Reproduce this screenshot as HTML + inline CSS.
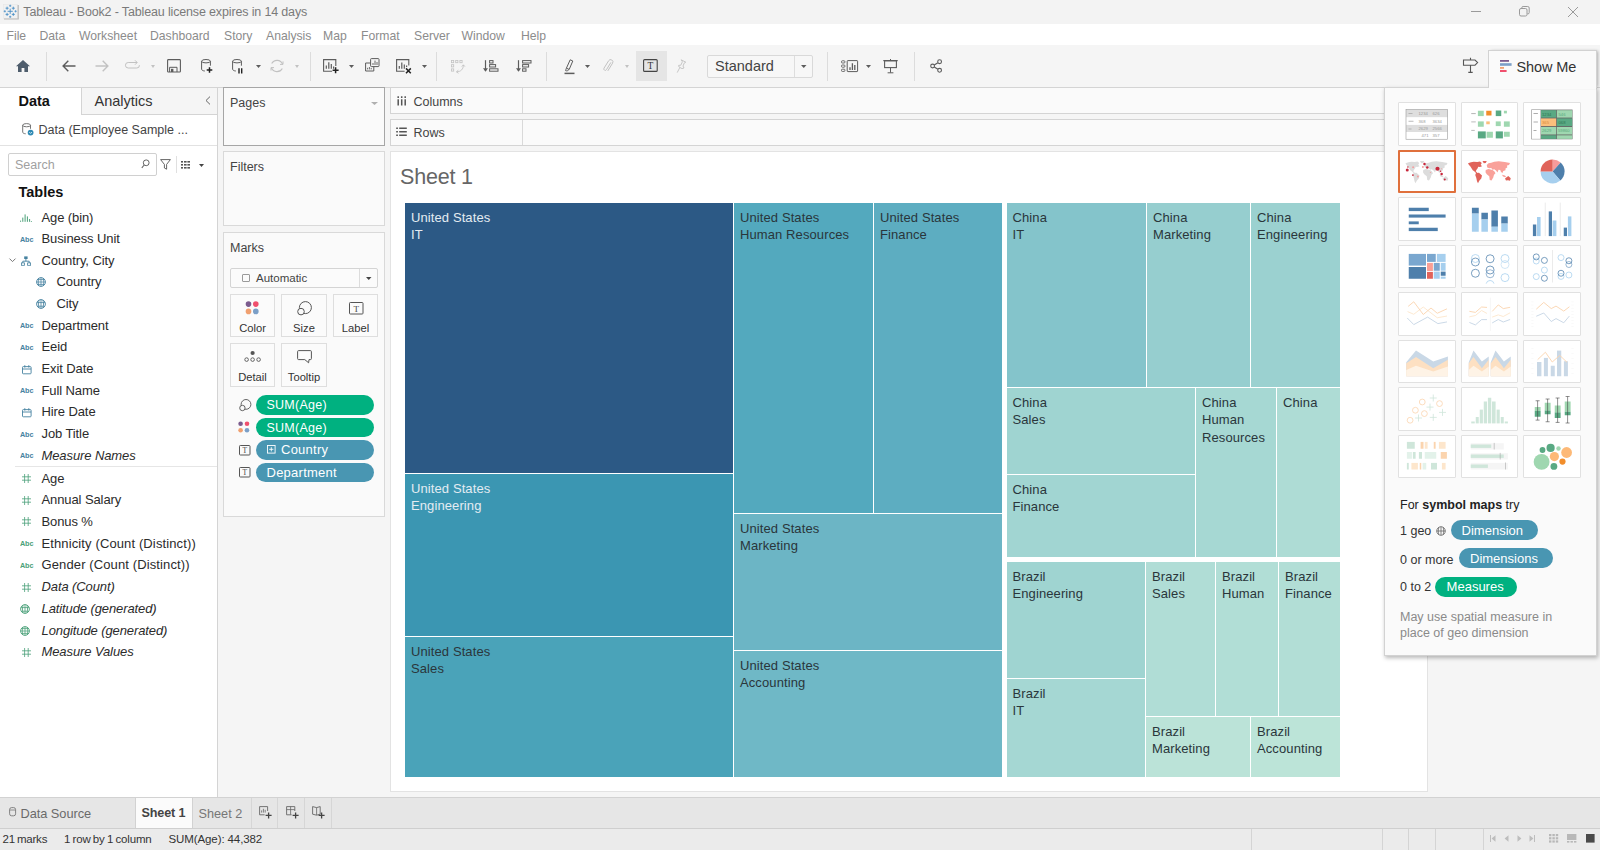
<!DOCTYPE html>
<html><head><meta charset="utf-8"><title>Tableau - Book2</title>
<style>
html,body{margin:0;padding:0;}
body{width:1600px;height:850px;overflow:hidden;position:relative;background:#f5f5f5;font-family:"Liberation Sans",sans-serif;color:#333;}
.t{position:absolute;white-space:nowrap;}
.b{position:absolute;box-sizing:border-box;}
svg{position:absolute;overflow:visible;}
.cell{position:absolute;box-sizing:border-box;font-size:13px;line-height:17.5px;letter-spacing:0.1px;padding:5.6px 0 0 6px;overflow:hidden;white-space:nowrap;}
</style></head><body>

<div class="b" style="left:0px;top:0px;width:1600px;height:24px;background:#f3f3f3;"></div>
<svg style="left:2.5px;top:4px" width="16" height="16" viewBox="0 0 16 16" ><rect x="0.5" y="0.5" width="14" height="14" fill="#f1f1f1" stroke="#e6e6e6" stroke-width="0.6"/><path d="M1 15h14.2V1" fill="none" stroke="#b8b8b8" stroke-width="1.2"/><path d="M4.6,7.3h5.2M7.2,4.699999999999999v5.2" stroke="#4a8fc6" stroke-width="0.9"/><path d="M6.1,1.8h2.2M7.2,0.7v2.2" stroke="#4a8fc6" stroke-width="0.8"/><path d="M6.1,12.8h2.2M7.2,11.700000000000001v2.2" stroke="#4a8fc6" stroke-width="0.8"/><path d="M0.7,7.3h2.2M1.8,6.199999999999999v2.2" stroke="#4a8fc6" stroke-width="0.8"/><path d="M11.5,7.3h2.2M12.6,6.199999999999999v2.2" stroke="#4a8fc6" stroke-width="0.8"/><path d="M2.5999999999999996,4.2h3.0M4.1,2.7v3.0" stroke="#4a8fc6" stroke-width="0.9"/><path d="M8.8,4.2h3.0M10.3,2.7v3.0" stroke="#4a8fc6" stroke-width="0.9"/><path d="M2.5999999999999996,10.4h3.0M4.1,8.9v3.0" stroke="#4a8fc6" stroke-width="0.9"/><path d="M8.8,10.4h3.0M10.3,8.9v3.0" stroke="#4a8fc6" stroke-width="0.9"/></svg>
<div class="t" style="left:23.3px;top:2.27px;font-size:12.5px;line-height:20px;color:#7a7a7a;letter-spacing:-0.15px;">Tableau - Book2 - Tableau license expires in 14 days</div>
<svg style="left:1471px;top:11px" width="10" height="1" viewBox="0 0 10 1" ><rect width="10" height="1" fill="#9a9a9a"/></svg><svg style="left:1519px;top:6px" width="11" height="11" viewBox="0 0 11 11" ><rect x="0.5" y="2.5" width="7.5" height="7.5" rx="1.5" fill="none" stroke="#9a9a9a"/><path d="M2.8 2.3V1.8q0-1.3 1.3-1.3h4.6q1.5 0 1.5 1.5v4.6q0 1.3-1.3 1.3h-0.6" fill="none" stroke="#9a9a9a"/></svg><svg style="left:1568px;top:6.5px" width="10" height="10" viewBox="0 0 10 10" ><path d="M0 0l10 10M10 0L0 10" stroke="#9a9a9a" stroke-width="1" fill="none"/></svg>
<div class="b" style="left:0px;top:24px;width:1600px;height:21px;background:#ffffff;"></div>
<div class="t" style="left:6.5px;top:25.77px;font-size:12.2px;line-height:20px;color:#8c8c8c;">File</div>
<div class="t" style="left:39.5px;top:25.77px;font-size:12.2px;line-height:20px;color:#8c8c8c;">Data</div>
<div class="t" style="left:79px;top:25.77px;font-size:12.2px;line-height:20px;color:#8c8c8c;">Worksheet</div>
<div class="t" style="left:150px;top:25.77px;font-size:12.2px;line-height:20px;color:#8c8c8c;">Dashboard</div>
<div class="t" style="left:224px;top:25.77px;font-size:12.2px;line-height:20px;color:#8c8c8c;">Story</div>
<div class="t" style="left:266px;top:25.77px;font-size:12.2px;line-height:20px;color:#8c8c8c;">Analysis</div>
<div class="t" style="left:323px;top:25.77px;font-size:12.2px;line-height:20px;color:#8c8c8c;">Map</div>
<div class="t" style="left:361px;top:25.77px;font-size:12.2px;line-height:20px;color:#8c8c8c;">Format</div>
<div class="t" style="left:414px;top:25.77px;font-size:12.2px;line-height:20px;color:#8c8c8c;">Server</div>
<div class="t" style="left:461.5px;top:25.77px;font-size:12.2px;line-height:20px;color:#8c8c8c;">Window</div>
<div class="t" style="left:521px;top:25.77px;font-size:12.2px;line-height:20px;color:#8c8c8c;">Help</div>
<div class="b" style="left:0px;top:45px;width:1600px;height:43px;background:#f5f5f5;border-bottom:1px solid #d4d4d4;"></div>
<div class="b" style="left:46px;top:52px;width:1px;height:29px;background:#dcdcdc;"></div>
<div class="b" style="left:310px;top:52px;width:1px;height:29px;background:#dcdcdc;"></div>
<div class="b" style="left:436px;top:52px;width:1px;height:29px;background:#dcdcdc;"></div>
<div class="b" style="left:546px;top:52px;width:1px;height:29px;background:#dcdcdc;"></div>
<div class="b" style="left:827px;top:52px;width:1px;height:29px;background:#dcdcdc;"></div>
<div class="b" style="left:914px;top:52px;width:1px;height:29px;background:#dcdcdc;"></div>
<div class="b" style="left:636px;top:51px;width:30.5px;height:30px;background:#e5e5e5;"></div>
<div class="b" style="left:707px;top:55px;width:106px;height:22.5px;background:#f7f7f7;border:1px solid #d9d9d9;border-radius:2px;"></div>
<div class="b" style="left:794px;top:56px;width:1px;height:20.5px;background:#dddddd;"></div>
<div class="t" style="left:715px;top:56.48px;font-size:14.5px;line-height:20px;color:#444;">Standard</div>
<svg style="left:16px;top:60px" width="14" height="12" viewBox="0 0 14 12" ><path d="M7 0L0 6.3h2V12h3.6V8h2.8v4H12V6.3h2z" fill="#4e5d6c"/></svg>
<svg style="left:62px;top:59.5px" width="14" height="12" viewBox="0 0 14 12" ><path d="M13.5 6H1.2M6.3 0.8L1.1 6l5.2 5.2" fill="none" stroke="#5c5c5c" stroke-width="1.4"/></svg>
<svg style="left:95px;top:59.5px" width="14" height="12" viewBox="0 0 14 12" ><path d="M0.5 6h12.3M7.7 0.8L12.9 6l-5.2 5.2" fill="none" stroke="#c2c2c2" stroke-width="1.4"/></svg>
<svg style="left:125px;top:60px" width="15" height="9" viewBox="0 0 15 9" ><path d="M10 0.3l2.2 2.2-2.2 2.2M12 2.5H3.2a2.7 2.7 0 0 0 0 5.5h8.6a2.6 2.6 0 0 0 2.6-2.8" fill="none" stroke="#c2c2c2" stroke-width="1"/></svg>
<svg style="left:150.5px;top:64.5px" width="4" height="3" viewBox="0 0 4 3" ><path d="M0 0h4l-2.0 3z" fill="#c2c2c2"/></svg>
<svg style="left:167px;top:59px" width="14" height="14" viewBox="0 0 14 14" ><rect x="0.6" y="0.6" width="12.8" height="12.4" rx="0.8" fill="none" stroke="#5c5c5c" stroke-width="1.1"/><path d="M2.6 13V8.3h7.4V13" fill="none" stroke="#5c5c5c" stroke-width="1"/><rect x="4" y="9.8" width="2.4" height="3.2" fill="#5c5c5c"/></svg>
<svg style="left:201px;top:59px" width="13" height="15" viewBox="0 0 13 15" ><ellipse cx="5" cy="2.2" rx="4.4" ry="1.7" fill="none" stroke="#5c5c5c" stroke-width="1"/><path d="M0.6 2.2v8c0 1 1.5 1.7 3.2 1.8M9.4 2.2v4.5" fill="none" stroke="#5c5c5c" stroke-width="1"/><path d="M8.5 8.2v5.6M5.7 11h5.6" stroke="#222" stroke-width="1.5"/></svg>
<svg style="left:232px;top:59px" width="13" height="16" viewBox="0 0 13 16" ><ellipse cx="5" cy="2.2" rx="4.4" ry="1.7" fill="none" stroke="#5c5c5c" stroke-width="1"/><path d="M0.6 2.2v8c0 1 1.5 1.7 3.2 1.8M9.4 2.2v4.5" fill="none" stroke="#5c5c5c" stroke-width="1"/><path d="M7 9.2v5.4M9.7 9.2v5.4" stroke="#222" stroke-width="1.4"/></svg>
<svg style="left:255.5px;top:64.5px" width="5" height="3" viewBox="0 0 5 3" ><path d="M0 0h5l-2.5 3z" fill="#5c5c5c"/></svg>
<svg style="left:270px;top:59px" width="14" height="14" viewBox="0 0 14 14" ><path d="M12.6 5.2A6 6 0 0 0 1.7 4.6M1.4 8.8A6 6 0 0 0 12.3 9.4" fill="none" stroke="#c2c2c2" stroke-width="1.1"/><path d="M10 5.4h3V2.4M4 8.6H1v3" fill="none" stroke="#c2c2c2" stroke-width="1"/></svg>
<svg style="left:295px;top:64.5px" width="4" height="3" viewBox="0 0 4 3" ><path d="M0 0h4l-2.0 3z" fill="#c2c2c2"/></svg>
<svg style="left:323px;top:59px" width="17" height="15" viewBox="0 0 17 15" ><path d="M12.8 7V0.6H0.6v11.6h8.5" fill="none" stroke="#5c5c5c" stroke-width="1.1"/><path d="M3.3 9.8V6.5M5.8 9.8V3.2M8.3 9.8V5M10.6 9.8V7.6" stroke="#5c5c5c" stroke-width="1.2"/><path d="M12.6 8.2v6M9.6 11.2h6" stroke="#222" stroke-width="1.5"/></svg>
<svg style="left:348.5px;top:64.5px" width="5" height="3" viewBox="0 0 5 3" ><path d="M0 0h5l-2.5 3z" fill="#5c5c5c"/></svg>
<svg style="left:365px;top:58px" width="15" height="14" viewBox="0 0 15 14" ><rect x="5.6" y="0.6" width="8.4" height="8" rx="0.8" fill="#f5f5f5" stroke="#5c5c5c" stroke-width="1"/><path d="M8 7V5M10 7V2.6M12 7V4" stroke="#5c5c5c" stroke-width="0.9"/><path d="M5.6 5H0.6v8h8.2V8.6" fill="none" stroke="#5c5c5c" stroke-width="1"/><path d="M2.6 11.4V9.8M4.4 11.4V9M6.2 11.4V10" stroke="#5c5c5c" stroke-width="0.9"/></svg>
<svg style="left:396px;top:59px" width="17" height="15" viewBox="0 0 17 15" ><path d="M12.8 6.5V0.6H0.6v11.6h8" fill="none" stroke="#5c5c5c" stroke-width="1.1"/><path d="M3.3 9.8V7M5.8 9.8V3.6M8.3 9.8V5.4M10.6 8V6.6" stroke="#5c5c5c" stroke-width="1.2"/><path d="M10 9.4l4.8 4.8M14.8 9.4L10 14.2" stroke="#222" stroke-width="1.5"/></svg>
<svg style="left:421.5px;top:64.5px" width="5" height="3" viewBox="0 0 5 3" ><path d="M0 0h5l-2.5 3z" fill="#5c5c5c"/></svg>
<svg style="left:451px;top:60px" width="14" height="14" viewBox="0 0 14 14" ><rect x="0.5" y="0.5" width="2.2" height="2.2" fill="none" stroke="#c2c2c2" stroke-width="0.8"/><rect x="4.7" y="0.5" width="2.2" height="2.2" fill="none" stroke="#c2c2c2" stroke-width="0.8"/><rect x="8.9" y="0.5" width="2.2" height="2.2" fill="none" stroke="#c2c2c2" stroke-width="0.8"/><rect x="0.5" y="4.7" width="2.2" height="2.2" fill="none" stroke="#c2c2c2" stroke-width="0.8"/><rect x="0.5" y="8.9" width="2.2" height="2.2" fill="none" stroke="#c2c2c2" stroke-width="0.8"/><path d="M12.4 5c0 4-2.5 6.8-6.8 6.8" fill="none" stroke="#c2c2c2" stroke-width="0.9"/><path d="M10.8 6.6l1.6-1.8 1.5 1.8M7.4 10.2l-1.9 1.6 1.9 1.5" fill="none" stroke="#c2c2c2" stroke-width="0.9"/></svg>
<svg style="left:483px;top:60px" width="16" height="13" viewBox="0 0 16 13" ><path d="M2.5 0.2v10.5" stroke="#5c5c5c" stroke-width="1.2"/><path d="M0 8.2h5l-2.5 3.6z" fill="#5c5c5c"/><rect x="6.6" y="0.6" width="3.4" height="2.4" fill="none" stroke="#5c5c5c" stroke-width="1"/><rect x="6.6" y="4.6" width="6" height="2.4" fill="none" stroke="#5c5c5c" stroke-width="1"/><rect x="6.6" y="8.8" width="8.4" height="2.4" fill="none" stroke="#5c5c5c" stroke-width="1"/></svg>
<svg style="left:516px;top:60px" width="16" height="13" viewBox="0 0 16 13" ><path d="M2.5 0.2v10.5" stroke="#5c5c5c" stroke-width="1.2"/><path d="M0 8.2h5l-2.5 3.6z" fill="#5c5c5c"/><rect x="6.6" y="0.6" width="8.4" height="2.4" fill="none" stroke="#5c5c5c" stroke-width="1"/><rect x="6.6" y="4.6" width="6" height="2.4" fill="none" stroke="#5c5c5c" stroke-width="1"/><rect x="6.6" y="8.8" width="3.4" height="2.4" fill="none" stroke="#5c5c5c" stroke-width="1"/></svg>
<svg style="left:563.5px;top:58.5px" width="12" height="16" viewBox="0 0 12 16" ><path d="M6.2 0.8l2.6 1.2-3.6 8.4-2.8-1.2z" fill="none" stroke="#5c5c5c" stroke-width="1"/><path d="M2.4 9.2l-0.9 2.4 1.6 0.4 2.1-1.6" fill="none" stroke="#5c5c5c" stroke-width="0.9"/><path d="M0.5 14.4h10" stroke="#5c5c5c" stroke-width="1.5"/></svg>
<svg style="left:584.5px;top:64.5px" width="5" height="3" viewBox="0 0 5 3" ><path d="M0 0h5l-2.5 3z" fill="#5c5c5c"/></svg>
<svg style="left:602px;top:59px" width="12" height="14" viewBox="0 0 12 14" ><path d="M8.6 3.4L4.2 10.6a1.4 1.4 0 0 1-2.5-1.4L6.3 1.8a2.3 2.3 0 0 1 4 2.3L5.5 11.9" fill="none" stroke="#c2c2c2" stroke-width="1" transform="translate(0.3,0)"/></svg>
<svg style="left:625px;top:64.5px" width="4" height="3" viewBox="0 0 4 3" ><path d="M0 0h4l-2.0 3z" fill="#c2c2c2"/></svg>
<svg style="left:643px;top:59px" width="15" height="13" viewBox="0 0 15 13" ><rect x="0.6" y="0.6" width="13.6" height="11.8" rx="1" fill="none" stroke="#444" stroke-width="1.1"/><text x="7.4" y="10" text-anchor="middle" font-family="Liberation Serif,serif" font-size="9.5" fill="#333">T</text></svg>
<svg style="left:676px;top:58.5px" width="11" height="15" viewBox="0 0 11 15" ><path d="M5.2 0.8l4.6 2.4-1.4 0.6-1.4 3.2 1 2-2 0.6-3-1.6-0.4-1.6 2.2-0.2 1.6-3.4z" fill="none" stroke="#c2c2c2" stroke-width="0.9" stroke-linejoin="round"/><path d="M3.8 8.6L1.2 13.6" stroke="#c2c2c2" stroke-width="0.9"/></svg>
<svg style="left:801px;top:64.5px" width="5.5" height="3" viewBox="0 0 5.5 3" ><path d="M0 0h5.5l-2.75 3z" fill="#5c5c5c"/></svg>
<svg style="left:841px;top:60px" width="18" height="13" viewBox="0 0 18 13" ><rect x="0.5" y="0.8" width="3.4" height="2.2" rx="0.8" fill="none" stroke="#5c5c5c" stroke-width="0.9"/><rect x="0.5" y="5" width="3.4" height="2.2" rx="0.8" fill="none" stroke="#5c5c5c" stroke-width="0.9"/><rect x="0.5" y="9.2" width="3.4" height="2.2" rx="0.8" fill="none" stroke="#5c5c5c" stroke-width="0.9"/><rect x="6.2" y="0.6" width="10.4" height="11" rx="0.6" fill="none" stroke="#5c5c5c" stroke-width="1"/><path d="M9 10V7.2M11.4 10V3.2M13.8 10V5" stroke="#5c5c5c" stroke-width="1.3"/></svg>
<svg style="left:865.5px;top:64.5px" width="5" height="3" viewBox="0 0 5 3" ><path d="M0 0h5l-2.5 3z" fill="#5c5c5c"/></svg>
<svg style="left:883px;top:58.5px" width="15" height="15" viewBox="0 0 15 15" ><path d="M0.3 1.6h14.4" stroke="#5c5c5c" stroke-width="1.2"/><path d="M7.5 0v1.4" stroke="#5c5c5c" stroke-width="1"/><rect x="1.6" y="1.8" width="11.8" height="6.8" fill="none" stroke="#5c5c5c" stroke-width="1.1"/><path d="M7.5 8.8v4.8M4.6 13.8h5.8" stroke="#5c5c5c" stroke-width="1"/></svg>
<svg style="left:930px;top:58.5px" width="13" height="14" viewBox="0 0 13 14" ><circle cx="2.6" cy="7" r="1.9" fill="none" stroke="#5c5c5c" stroke-width="1.1"/><circle cx="9.6" cy="2.7" r="1.9" fill="none" stroke="#5c5c5c" stroke-width="1.1"/><circle cx="9.6" cy="11.3" r="1.9" fill="none" stroke="#5c5c5c" stroke-width="1.1"/><path d="M4.3 6l3.6-2.3M4.3 8l3.6 2.3" stroke="#5c5c5c" stroke-width="1.1"/></svg>
<div class="b" style="left:0px;top:88px;width:217px;height:709px;background:#ffffff;"></div>
<div class="b" style="left:217px;top:88px;width:1px;height:709px;background:#d4d4d4;"></div>
<div class="b" style="left:81px;top:88px;width:136px;height:27px;background:#f5f5f5;border-left:1px solid #d4d4d4;border-bottom:1px solid #d4d4d4;"></div>
<div class="t" style="left:18.5px;top:90.58px;font-size:14.5px;line-height:20px;color:#111;font-weight:bold;">Data</div>
<div class="t" style="left:94.5px;top:90.78px;font-size:14.5px;line-height:20px;color:#333;">Analytics</div>
<div class="t" style="left:38.5px;top:119.87px;font-size:12.5px;line-height:20px;color:#444;">Data (Employee Sample ...</div>
<div class="b" style="left:0px;top:145px;width:217px;height:1px;background:#e2e2e2;"></div>
<div class="b" style="left:8px;top:153px;width:149px;height:23px;background:#fff;border:1px solid #d0d0d0;border-radius:2px;"></div>
<div class="t" style="left:15px;top:154.67px;font-size:12.5px;line-height:20px;color:#a0a0a0;">Search</div>
<div class="b" style="left:176px;top:156px;width:1px;height:17px;background:#e0e0e0;"></div>
<div class="t" style="left:18.5px;top:182.48px;font-size:14.5px;line-height:20px;color:#111;font-weight:bold;">Tables</div>
<div class="t" style="left:41.5px;top:207.50px;font-size:13px;line-height:20px;color:#2b2b2b;letter-spacing:-0.1px;">Age (bin)</div>
<div class="t" style="left:41.5px;top:229.15px;font-size:13px;line-height:20px;color:#2b2b2b;letter-spacing:-0.1px;">Business Unit</div>
<div class="t" style="left:41.5px;top:250.80px;font-size:13px;line-height:20px;color:#2b2b2b;letter-spacing:-0.1px;">Country, City</div>
<div class="t" style="left:56.5px;top:272.45px;font-size:13px;line-height:20px;color:#2b2b2b;letter-spacing:-0.1px;">Country</div>
<div class="t" style="left:56.5px;top:294.10px;font-size:13px;line-height:20px;color:#2b2b2b;letter-spacing:-0.1px;">City</div>
<div class="t" style="left:41.5px;top:315.75px;font-size:13px;line-height:20px;color:#2b2b2b;letter-spacing:-0.1px;">Department</div>
<div class="t" style="left:41.5px;top:337.40px;font-size:13px;line-height:20px;color:#2b2b2b;letter-spacing:-0.1px;">Eeid</div>
<div class="t" style="left:41.5px;top:359.05px;font-size:13px;line-height:20px;color:#2b2b2b;letter-spacing:-0.1px;">Exit Date</div>
<div class="t" style="left:41.5px;top:380.70px;font-size:13px;line-height:20px;color:#2b2b2b;letter-spacing:-0.1px;">Full Name</div>
<div class="t" style="left:41.5px;top:402.35px;font-size:13px;line-height:20px;color:#2b2b2b;letter-spacing:-0.1px;">Hire Date</div>
<div class="t" style="left:41.5px;top:424.00px;font-size:13px;line-height:20px;color:#2b2b2b;letter-spacing:-0.1px;">Job Title</div>
<div class="t" style="left:41.5px;top:445.65px;font-size:13px;line-height:20px;color:#2b2b2b;font-style:italic;letter-spacing:-0.1px;">Measure Names</div>
<div class="b" style="left:15px;top:466px;width:202px;height:1px;background:#e6e6e6;"></div>
<div class="t" style="left:41.5px;top:468.50px;font-size:13px;line-height:20px;color:#2b2b2b;letter-spacing:-0.1px;">Age</div>
<div class="t" style="left:41.5px;top:490.22px;font-size:13px;line-height:20px;color:#2b2b2b;letter-spacing:-0.1px;">Annual Salary</div>
<div class="t" style="left:41.5px;top:511.94px;font-size:13px;line-height:20px;color:#2b2b2b;letter-spacing:-0.1px;">Bonus %</div>
<div class="t" style="left:41.5px;top:533.66px;font-size:13px;line-height:20px;color:#2b2b2b;letter-spacing:0.12px;">Ethnicity (Count (Distinct))</div>
<div class="t" style="left:41.5px;top:555.38px;font-size:13px;line-height:20px;color:#2b2b2b;letter-spacing:0.12px;">Gender (Count (Distinct))</div>
<div class="t" style="left:41.5px;top:577.10px;font-size:13px;line-height:20px;color:#2b2b2b;font-style:italic;letter-spacing:-0.1px;">Data (Count)</div>
<div class="t" style="left:41.5px;top:598.82px;font-size:13px;line-height:20px;color:#2b2b2b;font-style:italic;letter-spacing:-0.1px;">Latitude (generated)</div>
<div class="t" style="left:41.5px;top:620.54px;font-size:13px;line-height:20px;color:#2b2b2b;font-style:italic;letter-spacing:-0.1px;">Longitude (generated)</div>
<div class="t" style="left:41.5px;top:642.26px;font-size:13px;line-height:20px;color:#2b2b2b;font-style:italic;letter-spacing:-0.1px;">Measure Values</div>
<svg style="left:20px;top:213.5px" width="12" height="8" viewBox="0 0 12 8" ><path d="M0.6 6.6v1.2M2.8 3.6v4.2M5.1 0.4v7.4M7.4 2.4v5.4M9.6 5v2.8M11.4 7v0.8" stroke="#4aa078" stroke-width="1" fill="none"/></svg>
<div class="t" style="left:20px;top:229.65px;font-size:8px;line-height:20px;font-weight:bold;color:#4682a0;letter-spacing:-0.1px;transform:scaleX(0.9);transform-origin:0 0;">Abc</div>
<svg style="left:21px;top:255.8px" width="10" height="10" viewBox="0 0 10 10" ><rect x="3.2" y="0.4" width="3.4" height="2.6" fill="#4682a0" /><path d="M4.9 3v2.2M1.8 7V5.2h6.4V7" fill="none" stroke="#4682a0" stroke-width="0.9"/><rect x="0.4" y="6.9" width="3" height="2.4" fill="none" stroke="#4682a0" stroke-width="0.8"/><rect x="6.6" y="6.9" width="3" height="2.4" fill="none" stroke="#4682a0" stroke-width="0.8"/></svg>
<svg style="left:36px;top:277.45px" width="10" height="10" viewBox="0 0 10 10" ><circle cx="5" cy="5" r="4.4" fill="none" stroke="#4682a0" stroke-width="0.9"/><path d="M5 0.6v8.8M0.6 5h8.8M1.4 2.6h7.2M1.4 7.4h7.2M3 1.2c-1 2.4-1 5.2 0 7.6M7 1.2c1 2.4 1 5.2 0 7.6" fill="none" stroke="#4682a0" stroke-width="0.75"/></svg>
<svg style="left:36px;top:299.1px" width="10" height="10" viewBox="0 0 10 10" ><circle cx="5" cy="5" r="4.4" fill="none" stroke="#4682a0" stroke-width="0.9"/><path d="M5 0.6v8.8M0.9 3.6h8.2M1.4 7.2h7.2M3.2 1.2c-1 2.4-1 5.2 0 7.6M6.8 1.2c1 2.4 1 5.2 0 7.6" fill="none" stroke="#4682a0" stroke-width="0.8"/></svg>
<div class="t" style="left:20px;top:316.25px;font-size:8px;line-height:20px;font-weight:bold;color:#4682a0;letter-spacing:-0.1px;transform:scaleX(0.9);transform-origin:0 0;">Abc</div>
<div class="t" style="left:20px;top:337.90px;font-size:8px;line-height:20px;font-weight:bold;color:#4682a0;letter-spacing:-0.1px;transform:scaleX(0.9);transform-origin:0 0;">Abc</div>
<svg style="left:21.5px;top:364.54999999999995px" width="10" height="9.5" viewBox="0 0 10 9.5" ><rect x="0.5" y="1.6" width="8.6" height="7.2" rx="0.8" fill="none" stroke="#4682a0" stroke-width="0.9"/><path d="M0.5 4h8.6M2.8 0.2v2.4M6.8 0.2v2.4" stroke="#4682a0" stroke-width="0.9" fill="none"/></svg>
<div class="t" style="left:20px;top:381.20px;font-size:8px;line-height:20px;font-weight:bold;color:#4682a0;letter-spacing:-0.1px;transform:scaleX(0.9);transform-origin:0 0;">Abc</div>
<svg style="left:21.5px;top:407.85px" width="10" height="9.5" viewBox="0 0 10 9.5" ><rect x="0.5" y="1.6" width="8.6" height="7.2" rx="0.8" fill="none" stroke="#4682a0" stroke-width="0.9"/><path d="M0.5 4h8.6M2.8 0.2v2.4M6.8 0.2v2.4" stroke="#4682a0" stroke-width="0.9" fill="none"/></svg>
<div class="t" style="left:20px;top:424.50px;font-size:8px;line-height:20px;font-weight:bold;color:#4682a0;letter-spacing:-0.1px;transform:scaleX(0.9);transform-origin:0 0;">Abc</div>
<div class="t" style="left:20px;top:446.15px;font-size:8px;line-height:20px;font-weight:bold;color:#4682a0;letter-spacing:-0.1px;transform:scaleX(0.9);transform-origin:0 0;">Abc</div>
<svg style="left:22px;top:474.0px" width="9" height="9" viewBox="0 0 9 9" ><path d="M2.6 0v9M6.2 0v9M0 2.8h9M0 6.2h9" stroke="#4aa078" stroke-width="0.8" fill="none"/></svg>
<svg style="left:22px;top:495.72px" width="9" height="9" viewBox="0 0 9 9" ><path d="M2.6 0v9M6.2 0v9M0 2.8h9M0 6.2h9" stroke="#4aa078" stroke-width="0.8" fill="none"/></svg>
<svg style="left:22px;top:517.44px" width="9" height="9" viewBox="0 0 9 9" ><path d="M2.6 0v9M6.2 0v9M0 2.8h9M0 6.2h9" stroke="#4aa078" stroke-width="0.8" fill="none"/></svg>
<div class="t" style="left:20px;top:534.16px;font-size:8px;line-height:20px;font-weight:bold;color:#4aa078;letter-spacing:-0.1px;transform:scaleX(0.9);transform-origin:0 0;">Abc</div>
<div class="t" style="left:20px;top:555.88px;font-size:8px;line-height:20px;font-weight:bold;color:#4aa078;letter-spacing:-0.1px;transform:scaleX(0.9);transform-origin:0 0;">Abc</div>
<svg style="left:22px;top:582.6px" width="9" height="9" viewBox="0 0 9 9" ><path d="M2.6 0v9M6.2 0v9M0 2.8h9M0 6.2h9" stroke="#4aa078" stroke-width="0.8" fill="none"/></svg>
<svg style="left:20px;top:603.8199999999999px" width="10" height="10" viewBox="0 0 10 10" ><circle cx="5" cy="5" r="4.4" fill="none" stroke="#4aa078" stroke-width="0.9"/><path d="M5 0.6v8.8M0.9 3.6h8.2M1.4 7.2h7.2M3.2 1.2c-1 2.4-1 5.2 0 7.6M6.8 1.2c1 2.4 1 5.2 0 7.6" fill="none" stroke="#4aa078" stroke-width="0.8"/></svg>
<svg style="left:20px;top:625.54px" width="10" height="10" viewBox="0 0 10 10" ><circle cx="5" cy="5" r="4.4" fill="none" stroke="#4aa078" stroke-width="0.9"/><path d="M5 0.6v8.8M0.6 5h8.8M1.4 2.6h7.2M1.4 7.4h7.2M3 1.2c-1 2.4-1 5.2 0 7.6M7 1.2c1 2.4 1 5.2 0 7.6" fill="none" stroke="#4aa078" stroke-width="0.75"/></svg>
<svg style="left:22px;top:647.76px" width="9" height="9" viewBox="0 0 9 9" ><path d="M2.6 0v9M6.2 0v9M0 2.8h9M0 6.2h9" stroke="#4aa078" stroke-width="0.8" fill="none"/></svg>
<svg style="left:8.5px;top:257.5px" width="7" height="5" viewBox="0 0 7 5" ><path d="M0.5 0.6l3 3 3-3" fill="none" stroke="#777" stroke-width="1"/></svg>
<div class="b" style="left:223px;top:87px;width:162px;height:59px;background:#fafafa;border:1px solid #a6a6a6;"></div>
<div class="t" style="left:230px;top:93.17px;font-size:12.5px;line-height:20px;color:#444;">Pages</div>
<div class="b" style="left:223px;top:151px;width:162px;height:75px;background:#fafafa;border:1px solid #d9d9d9;"></div>
<div class="t" style="left:230px;top:156.67px;font-size:12.5px;line-height:20px;color:#444;">Filters</div>
<div class="b" style="left:223px;top:232px;width:162px;height:285px;background:#fafafa;border:1px solid #d9d9d9;"></div>
<div class="t" style="left:230px;top:238.17px;font-size:12.5px;line-height:20px;color:#444;">Marks</div>
<div class="b" style="left:230px;top:268px;width:148px;height:20px;background:#fbfbfb;border:1px solid #d4d4d4;border-radius:2px;"></div>
<div class="b" style="left:359px;top:269px;width:1px;height:18px;background:#dcdcdc;"></div>
<div class="b" style="left:241.5px;top:274px;width:8px;height:8px;border:1px solid #9a9a9a;border-radius:1px;"></div>
<div class="t" style="left:256px;top:268.02px;font-size:11.5px;line-height:20px;color:#444;">Automatic</div>
<div class="b" style="left:230px;top:294px;width:45px;height:43px;background:#fbfbfb;border:1px solid #dedede;"></div>
<div class="t" style="left:230px;top:318.42px;font-size:11.2px;line-height:20px;color:#333;width:45px;text-align:center;">Color</div>
<div class="b" style="left:281px;top:294px;width:46px;height:43px;background:#fbfbfb;border:1px solid #dedede;"></div>
<div class="t" style="left:281px;top:318.42px;font-size:11.2px;line-height:20px;color:#333;width:46px;text-align:center;">Size</div>
<div class="b" style="left:333px;top:294px;width:45px;height:43px;background:#fbfbfb;border:1px solid #dedede;"></div>
<div class="t" style="left:333px;top:318.42px;font-size:11.2px;line-height:20px;color:#333;width:45px;text-align:center;">Label</div>
<div class="b" style="left:230px;top:343px;width:45px;height:43.5px;background:#fbfbfb;border:1px solid #dedede;"></div>
<div class="t" style="left:230px;top:367.42px;font-size:11.2px;line-height:20px;color:#333;width:45px;text-align:center;">Detail</div>
<div class="b" style="left:281px;top:343px;width:46px;height:43.5px;background:#fbfbfb;border:1px solid #dedede;"></div>
<div class="t" style="left:281px;top:367.42px;font-size:11.2px;line-height:20px;color:#333;width:46px;text-align:center;">Tooltip</div>
<div class="b" style="left:255.5px;top:395px;width:118.5px;height:19.5px;background:#00b180;border-radius:10px;"></div>
<div class="t" style="left:266.5px;top:395.27px;font-size:12.5px;line-height:20px;color:#fff;letter-spacing:0.25px;">SUM(Age)</div>
<div class="b" style="left:255.5px;top:417.5px;width:118.5px;height:19.5px;background:#00b180;border-radius:10px;"></div>
<div class="t" style="left:266.5px;top:417.77px;font-size:12.5px;line-height:20px;color:#fff;letter-spacing:0.25px;">SUM(Age)</div>
<div class="b" style="left:255.5px;top:440px;width:118.5px;height:19.5px;background:#4996b2;border-radius:10px;"></div>
<div class="t" style="left:281px;top:440.10px;font-size:13px;line-height:20px;color:#fff;letter-spacing:0.25px;">Country</div>
<div class="b" style="left:255.5px;top:462.5px;width:118.5px;height:19.5px;background:#4996b2;border-radius:10px;"></div>
<div class="t" style="left:266.5px;top:462.60px;font-size:13px;line-height:20px;color:#fff;letter-spacing:0.25px;">Department</div>
<svg style="left:245px;top:300px" width="16" height="16" viewBox="0 0 16 16" ><circle cx="3.5" cy="4.1" r="2.8" fill="#7b5b8e"/><circle cx="10.8" cy="4.1" r="2.8" fill="#f0506e"/><circle cx="3.5" cy="11.399999999999999" r="2.8" fill="#f0a070"/><circle cx="10.8" cy="11.399999999999999" r="2.8" fill="#7b9fc7"/></svg>
<svg style="left:296.5px;top:300.5px" width="16" height="15" viewBox="0 0 16 15" ><circle cx="8.4" cy="6.6" r="6" fill="none" stroke="#555" stroke-width="1"/><circle cx="4" cy="10.6" r="3.3" fill="#fafafa" stroke="#555" stroke-width="1"/></svg>
<svg style="left:348.5px;top:302px" width="14.5" height="12.5" viewBox="0 0 14.5 12.5" ><rect x="0.5" y="0.5" width="13.5" height="11.5" rx="0.8" fill="none" stroke="#555" stroke-width="1"/><text x="7.25" y="9.8" text-anchor="middle" font-family="Liberation Serif,serif" font-size="9" fill="#444">T</text></svg>
<svg style="left:243.5px;top:350px" width="18" height="13" viewBox="0 0 18 13" ><circle cx="8.6" cy="3" r="2.1" fill="#555"/><circle cx="2.6" cy="9.6" r="1.8" fill="none" stroke="#555" stroke-width="0.9"/><circle cx="8.6" cy="9.6" r="1.8" fill="none" stroke="#555" stroke-width="0.9"/><circle cx="14.6" cy="9.6" r="1.8" fill="none" stroke="#555" stroke-width="0.9"/></svg>
<svg style="left:296.5px;top:350px" width="16" height="14" viewBox="0 0 16 14" ><path d="M1.6 0.6h11.8q1 0 1 1v7q0 1-1 1H12l-0.4 3.2L7.8 9.6H1.6q-1 0-1-1v-7q0-1 1-1z" fill="none" stroke="#555" stroke-width="1" stroke-linejoin="round"/></svg>
<svg style="left:238.5px;top:398.5px" width="13" height="13" viewBox="0 0 13 13" ><circle cx="7" cy="5.4" r="4.9" fill="none" stroke="#555" stroke-width="0.9"/><circle cx="3.4" cy="9" r="2.7" fill="#fafafa" stroke="#555" stroke-width="0.9"/></svg>
<svg style="left:238px;top:421px" width="13" height="13" viewBox="0 0 13 13" ><circle cx="2.6" cy="2.8" r="2.3" fill="#7b5b8e"/><circle cx="9.0" cy="2.8" r="2.3" fill="#f0506e"/><circle cx="2.6" cy="9.2" r="2.3" fill="#f0a070"/><circle cx="9.0" cy="9.2" r="2.3" fill="#7b9fc7"/></svg>
<svg style="left:238.5px;top:444.5px" width="11.5" height="10.5" viewBox="0 0 11.5 10.5" ><rect x="0.5" y="0.5" width="10.5" height="9.5" rx="0.8" fill="none" stroke="#555" stroke-width="1"/><text x="5.75" y="8.2" text-anchor="middle" font-family="Liberation Serif,serif" font-size="7.5" fill="#444">T</text></svg>
<svg style="left:238.5px;top:467px" width="11.5" height="10.5" viewBox="0 0 11.5 10.5" ><rect x="0.5" y="0.5" width="10.5" height="9.5" rx="0.8" fill="none" stroke="#555" stroke-width="1"/><text x="5.75" y="8.2" text-anchor="middle" font-family="Liberation Serif,serif" font-size="7.5" fill="#444">T</text></svg>
<svg style="left:267px;top:445px" width="9" height="9" viewBox="0 0 9 9" ><rect x="0.5" y="0.5" width="7.6" height="7.6" fill="none" stroke="#fff" stroke-width="0.9"/><path d="M2.2 4.3h4.2M4.3 2.2v4.2" stroke="#fff" stroke-width="0.9"/></svg>
<div class="b" style="left:390px;top:88px;width:1px;height:64px;background:#f5f5f5;"></div>
<div class="b" style="left:390px;top:87px;width:995px;height:27px;background:#fafafa;border:1px solid #d4d4d4;"></div>
<div class="b" style="left:522px;top:88px;width:1px;height:25px;background:#d9d9d9;"></div>
<div class="t" style="left:413.5px;top:91.67px;font-size:12.5px;line-height:20px;color:#444;">Columns</div>
<div class="b" style="left:390px;top:119px;width:995px;height:27px;background:#fafafa;border:1px solid #d4d4d4;"></div>
<div class="b" style="left:522px;top:120px;width:1px;height:25px;background:#d9d9d9;"></div>
<div class="t" style="left:413.5px;top:123.17px;font-size:12.5px;line-height:20px;color:#444;">Rows</div>
<svg style="left:396.5px;top:95.5px" width="10" height="10" viewBox="0 0 10 10" ><path d="M1.2 3.2v6.4M4.7 3.2v6.4M8.2 3.2v6.4" stroke="#555" stroke-width="1.5"/><path d="M1.2 0.3v1.6M4.7 0.3v1.6M8.2 0.3v1.6" stroke="#555" stroke-width="1.5"/></svg><svg style="left:396px;top:127px" width="11" height="10" viewBox="0 0 11 10" ><path d="M3.2 1.2h7.6M3.2 4.7h7.6M3.2 8.2h7.6" stroke="#555" stroke-width="1.5"/><path d="M0.2 1.2h1.7M0.2 4.7h1.7M0.2 8.2h1.7" stroke="#555" stroke-width="1.5"/></svg>
<div class="b" style="left:390px;top:151px;width:1038px;height:641px;background:#ffffff;border:1px solid #e3e3e3;"></div>
<div class="t" style="left:400px;top:161.55px;font-size:21.5px;line-height:30px;color:#666;letter-spacing:-0.2px;">Sheet 1</div>
<div class="cell" style="left:405px;top:203px;width:328px;height:270px;background:#2c5985;color:#e4ecf2;">United States<br>IT</div>
<div class="cell" style="left:405px;top:474px;width:328px;height:162px;background:#3b96b2;color:#e4ecf2;">United States<br>Engineering</div>
<div class="cell" style="left:405px;top:637px;width:328px;height:140px;background:#4aa3b9;color:#2a363b;">United States<br>Sales</div>
<div class="cell" style="left:734px;top:203px;width:139px;height:310px;background:#53a9be;color:#2a363b;">United States<br>Human Resources</div>
<div class="cell" style="left:874px;top:203px;width:128px;height:310px;background:#5dadc1;color:#2a363b;">United States<br>Finance</div>
<div class="cell" style="left:734px;top:514px;width:268px;height:136px;background:#6cb5c5;color:#2a363b;">United States<br>Marketing</div>
<div class="cell" style="left:734px;top:651px;width:268px;height:126px;background:#6fb8c6;color:#2a363b;">United States<br>Accounting</div>
<div class="cell" style="left:1006.5px;top:203px;width:139.5px;height:184px;background:#84c4cb;color:#2a363b;">China<br>IT</div>
<div class="cell" style="left:1147px;top:203px;width:103px;height:184px;background:#96cecf;color:#2a363b;">China<br>Marketing</div>
<div class="cell" style="left:1251px;top:203px;width:89px;height:184px;background:#9bd1d0;color:#2a363b;">China<br>Engineering</div>
<div class="cell" style="left:1006.5px;top:388px;width:188.5px;height:86px;background:#9fd4d1;color:#2a363b;">China<br>Sales</div>
<div class="cell" style="left:1006.5px;top:475px;width:188.5px;height:82px;background:#a1d5d2;color:#2a363b;">China<br>Finance</div>
<div class="cell" style="left:1196px;top:388px;width:80px;height:169px;background:#a6d8d3;color:#2a363b;">China<br>Human<br>Resources</div>
<div class="cell" style="left:1277px;top:388px;width:63px;height:169px;background:#aedcd5;color:#2a363b;">China</div>
<div class="cell" style="left:1006.5px;top:562px;width:138.5px;height:116px;background:#9fd4d1;color:#2a363b;">Brazil<br>Engineering</div>
<div class="cell" style="left:1006.5px;top:679px;width:138.5px;height:98px;background:#a5d7d3;color:#2a363b;">Brazil<br>IT</div>
<div class="cell" style="left:1146px;top:562px;width:69px;height:154px;background:#b0ddd6;color:#2a363b;">Brazil<br>Sales</div>
<div class="cell" style="left:1216px;top:562px;width:62px;height:154px;background:#b1ded6;color:#2a363b;">Brazil<br>Human</div>
<div class="cell" style="left:1279px;top:562px;width:61px;height:154px;background:#b2ded6;color:#2a363b;">Brazil<br>Finance</div>
<div class="cell" style="left:1146px;top:717px;width:104px;height:60px;background:#bbe3d8;color:#2a363b;">Brazil<br>Marketing</div>
<div class="cell" style="left:1251px;top:717px;width:89px;height:60px;background:#bce4d8;color:#2a363b;">Brazil<br>Accounting</div>
<div class="b" style="left:0px;top:797px;width:1600px;height:32px;background:#e6e6e6;border-top:1px solid #d2d2d2;"></div>
<div class="b" style="left:135px;top:798px;width:58px;height:30px;background:#fbfbfb;border-left:1px solid #d2d2d2;border-right:1px solid #d2d2d2;"></div>
<div class="b" style="left:251px;top:798px;width:1px;height:30px;background:#d6d6d6;"></div>
<div class="b" style="left:277px;top:798px;width:1px;height:30px;background:#d6d6d6;"></div>
<div class="b" style="left:304px;top:798px;width:1px;height:30px;background:#d6d6d6;"></div>
<div class="b" style="left:331px;top:798px;width:1px;height:30px;background:#d6d6d6;"></div>
<div class="t" style="left:20.5px;top:803.56px;font-size:12.8px;line-height:20px;color:#6a6a6a;letter-spacing:-0.05px;">Data Source</div>
<div class="t" style="left:141.5px;top:803.23px;font-size:12.6px;line-height:20px;color:#444;font-weight:bold;letter-spacing:-0.15px;">Sheet 1</div>
<div class="t" style="left:198.5px;top:803.60px;font-size:12.7px;line-height:20px;color:#777;">Sheet 2</div>
<svg style="left:9px;top:807px" width="8" height="10" viewBox="0 0 8 10" ><rect x="0.6" y="0.6" width="6" height="8.2" rx="2" fill="none" stroke="#777" stroke-width="0.9"/><path d="M0.6 3h6" stroke="#777" stroke-width="0.8"/></svg>
<svg style="left:258.5px;top:806px" width="14" height="13" viewBox="0 0 14 13" ><path d="M8.6 5V0.6H0.6v8.2h5" fill="none" stroke="#666" stroke-width="0.9"/><path d="M2.6 6.6V4.4M4.4 6.6V2.8M6.2 6.6V3.8" stroke="#666" stroke-width="0.8"/><path d="M9.6 6.4v6M6.6 9.4h6" stroke="#444" stroke-width="1.3"/></svg>
<svg style="left:285.5px;top:806px" width="14" height="13" viewBox="0 0 14 13" ><path d="M8.8 5V0.6H0.6v8.2h5" fill="none" stroke="#666" stroke-width="0.9"/><path d="M0.6 3.6h8.2M4.6 0.6v8" stroke="#666" stroke-width="0.8"/><path d="M9.6 6.4v6M6.6 9.4h6" stroke="#444" stroke-width="1.3"/></svg>
<svg style="left:312px;top:806px" width="14" height="13" viewBox="0 0 14 13" ><path d="M4.6 1.6L0.6 0.6v7.6l4 1 3.6-1V0.6z" fill="none" stroke="#666" stroke-width="0.9"/><path d="M4.6 1.6v7.4" stroke="#666" stroke-width="0.8"/><path d="M9.6 6.4v6M6.6 9.4h6" stroke="#444" stroke-width="1.3"/></svg>
<div class="b" style="left:0px;top:828px;width:1600px;height:22px;background:#ebebeb;border-top:1px solid #cfcfcf;"></div>
<div class="t" style="left:2.5px;top:829.22px;font-size:11.5px;line-height:20px;color:#333;letter-spacing:-0.2px;word-spacing:-1px;">21 marks</div>
<div class="t" style="left:64px;top:829.22px;font-size:11.5px;line-height:20px;color:#333;letter-spacing:-0.15px;word-spacing:-0.8px;">1 row by 1 column</div>
<div class="t" style="left:168.5px;top:829.22px;font-size:11.5px;line-height:20px;color:#333;letter-spacing:-0.1px;">SUM(Age): 44,382</div>
<div class="b" style="left:1251px;top:829px;width:1px;height:21px;background:#d4d4d4;"></div>
<div class="b" style="left:1382px;top:829px;width:1px;height:21px;background:#d4d4d4;"></div>
<div class="b" style="left:1408px;top:829px;width:1px;height:21px;background:#d4d4d4;"></div>
<div class="b" style="left:1435px;top:829px;width:1px;height:21px;background:#d4d4d4;"></div>
<div class="b" style="left:1483px;top:829px;width:1px;height:21px;background:#d4d4d4;"></div>
<svg style="left:1490px;top:835px" width="6" height="7" viewBox="0 0 6 7" ><path d="M0.5 0v7" stroke="#bdbdbd" stroke-width="1"/><path d="M5.5 0.3v6.4L1.6 3.5z" fill="#bdbdbd"/></svg>
<svg style="left:1504px;top:835px" width="5" height="7" viewBox="0 0 5 7" ><path d="M4.5 0.3v6.4L0.6 3.5z" fill="#bdbdbd"/></svg>
<svg style="left:1517px;top:835px" width="5" height="7" viewBox="0 0 5 7" ><path d="M0.5 0.3v6.4L4.4 3.5z" fill="#bdbdbd"/></svg>
<svg style="left:1529px;top:835px" width="6" height="7" viewBox="0 0 6 7" ><path d="M5.5 0v7" stroke="#bdbdbd" stroke-width="1"/><path d="M0.5 0.3v6.4L4.4 3.5z" fill="#bdbdbd"/></svg>
<svg style="left:1549px;top:834px" width="10" height="10" viewBox="0 0 10 10" ><rect x="0.0" y="0.0" width="2.4" height="2.2" fill="#b8b8b8"/><rect x="0.0" y="3.2" width="2.4" height="2.2" fill="#b8b8b8"/><rect x="0.0" y="6.4" width="2.4" height="2.2" fill="#b8b8b8"/><rect x="3.4" y="0.0" width="2.4" height="2.2" fill="#b8b8b8"/><rect x="3.4" y="3.2" width="2.4" height="2.2" fill="#b8b8b8"/><rect x="3.4" y="6.4" width="2.4" height="2.2" fill="#b8b8b8"/><rect x="6.8" y="0.0" width="2.4" height="2.2" fill="#b8b8b8"/><rect x="6.8" y="3.2" width="2.4" height="2.2" fill="#b8b8b8"/><rect x="6.8" y="6.4" width="2.4" height="2.2" fill="#b8b8b8"/></svg>
<svg style="left:1567px;top:834px" width="10" height="9" viewBox="0 0 10 9" ><rect x="0" y="0" width="9.4" height="6" fill="#b8b8b8"/><rect x="0" y="7" width="2.4" height="1.6" fill="#b8b8b8"/><rect x="3.5" y="7" width="2.4" height="1.6" fill="#b8b8b8"/><rect x="7" y="7" width="2.4" height="1.6" fill="#b8b8b8"/></svg>
<svg style="left:1586px;top:834px" width="9" height="9" viewBox="0 0 9 9" ><rect x="0" y="0" width="8.6" height="8.6" fill="#4a4a4a"/></svg>
<div class="b" style="left:1384px;top:87px;width:213px;height:569px;background:#fafafa;border:1px solid #d2d2d2;border-top:1px solid #d4d4d4;box-shadow:1px 2px 4px rgba(0,0,0,0.28);"></div>
<div class="b" style="left:1488px;top:50px;width:109px;height:38px;background:#fafafa;border:1px solid #d2d2d2;border-bottom:none;box-shadow:2px 0px 3px -1px rgba(0,0,0,0.3);"></div>
<div class="b" style="left:1489px;top:86px;width:107px;height:3px;background:#fafafa;"></div>
<svg style="left:1500px;top:60px" width="12" height="12" viewBox="0 0 12 12"><rect x="0" y="0" width="9" height="1.8" fill="#7b5b8e"/><rect x="0" y="3.2" width="11.6" height="2.6" fill="#7b9fc7"/><rect x="0" y="7" width="4" height="1.8" fill="#f0a070"/><rect x="0" y="10" width="6.6" height="2" fill="#f0506e"/></svg>
<div class="t" style="left:1516.5px;top:56.5px;font-size:14.5px;line-height:20px;color:#333;letter-spacing:-0.1px;">Show Me</div>
<svg style="left:1462px;top:57px" width="18" height="17" viewBox="0 0 18 17" fill="none" stroke="#555" stroke-width="1.1"><path d="M8.5 0.8v2.2M1.5 3h11.5l2.6 2.6-2.6 2.6H1.5zM8.5 8.2v7.2M6.3 15.4h4.4"/></svg>
<div class="b" style="left:1398px;top:102px;width:58px;height:44px;background:#fff;border:1px solid #e1e1e1;border-radius:1px;"></div>
<svg style="left:1398.25px;top:102.5px" width="57" height="43" viewBox="0 0 57 43"><rect x="8.00" y="6.60" width="41.50" height="7.80" fill="#dedede"/><rect x="8.00" y="14.40" width="41.50" height="7.50" fill="#fff"/><rect x="8.00" y="21.90" width="41.50" height="7.20" fill="#dedede"/><rect x="8.00" y="29.10" width="41.50" height="7.15" fill="#fff"/><rect x="8" y="6.6" width="41.5" height="29.65" fill="none" stroke="#9a9a9a" stroke-width="0.6"/><rect x="10.50" y="10.00" width="4.00" height="0.80" fill="#aaa"/><rect x="10.50" y="17.80" width="5.00" height="0.80" fill="#aaa"/><rect x="10.50" y="25.60" width="3.00" height="0.80" fill="#aaa"/><text x="20.5" y="12.2" font-size="4.2" fill="#9a9a9a" font-family="Liberation Sans,sans-serif">1234</text><text x="34.5" y="12.2" font-size="4.2" fill="#9a9a9a" font-family="Liberation Sans,sans-serif">626</text><text x="20.5" y="19.7" font-size="4.2" fill="#9a9a9a" font-family="Liberation Sans,sans-serif">368</text><text x="34.5" y="19.7" font-size="4.2" fill="#9a9a9a" font-family="Liberation Sans,sans-serif">3634</text><text x="20.5" y="27.3" font-size="4.2" fill="#9a9a9a" font-family="Liberation Sans,sans-serif">2629</text><text x="34.5" y="27.3" font-size="4.2" fill="#9a9a9a" font-family="Liberation Sans,sans-serif">2566</text><text x="23.5" y="34.3" font-size="4.2" fill="#9a9a9a" font-family="Liberation Sans,sans-serif">471</text><text x="34.5" y="34.3" font-size="4.2" fill="#9a9a9a" font-family="Liberation Sans,sans-serif">357</text></svg>
<div class="b" style="left:1461px;top:102px;width:57px;height:44px;background:#fff;border:1px solid #e1e1e1;border-radius:1px;"></div>
<svg style="left:1461.25px;top:102.5px" width="57" height="43" viewBox="0 0 57 43"><rect x="10.25" y="10.00" width="4.50" height="1.10" fill="#bbb"/><rect x="10.25" y="18.40" width="4.50" height="1.00" fill="#bbb"/><rect x="10.25" y="26.90" width="3.50" height="1.00" fill="#bbb"/><rect x="16.90" y="7.75" width="5.85" height="5.35" fill="#9fd7b0"/><rect x="25.25" y="7.75" width="5.25" height="4.75" fill="#f28e2b"/><rect x="34.75" y="7.50" width="5.50" height="5.60" fill="#59a983"/><rect x="42.90" y="7.75" width="3.00" height="2.65" fill="#9fd7b0"/><rect x="16.90" y="18.40" width="5.85" height="5.35" fill="#9fd7b0"/><rect x="25.25" y="18.40" width="3.50" height="2.85" fill="#fbbf7c"/><rect x="34.75" y="18.40" width="5.00" height="4.70" fill="#9fd7b0"/><rect x="42.90" y="18.40" width="5.85" height="5.35" fill="#9fd7b0"/><rect x="16.90" y="28.40" width="7.85" height="7.00" fill="#59a983"/><rect x="25.60" y="28.75" width="6.30" height="6.00" fill="#9fd7b0"/><rect x="34.75" y="28.40" width="7.15" height="7.00" fill="#59a983"/><rect x="42.90" y="28.75" width="5.85" height="5.00" fill="#9fd7b0"/></svg>
<div class="b" style="left:1523px;top:102px;width:58px;height:44px;background:#fff;border:1px solid #e1e1e1;border-radius:1px;"></div>
<svg style="left:1523.25px;top:102.5px" width="57" height="43" viewBox="0 0 57 43"><rect x="8.25" y="6.60" width="41.25" height="29.65" fill="#666"/><rect x="8.60" y="7.00" width="9.00" height="28.90" fill="#fff"/><rect x="18.00" y="7.20" width="15.20" height="7.40" fill="#59a983"/><rect x="33.90" y="7.20" width="15.30" height="7.40" fill="#9fd7b0"/><rect x="18.00" y="15.40" width="15.20" height="7.70" fill="#fbbf7c"/><rect x="33.90" y="15.40" width="15.30" height="7.70" fill="#59a983"/><rect x="18.00" y="24.00" width="15.20" height="7.50" fill="#9fd7b0"/><rect x="33.90" y="24.00" width="15.30" height="7.50" fill="#9fd7b0"/><rect x="18.00" y="32.30" width="15.20" height="3.60" fill="#59a983"/><rect x="33.90" y="32.30" width="15.30" height="3.60" fill="#9fd7b0"/><rect x="10.50" y="10.20" width="4.40" height="0.80" fill="#999"/><rect x="10.50" y="18.60" width="4.40" height="0.80" fill="#999"/><rect x="10.50" y="27.00" width="3.00" height="0.80" fill="#999"/><text x="19" y="12.6" font-size="4.2" fill="#2f7552" font-family="Liberation Sans,sans-serif">1234</text><text x="35.5" y="12.6" font-size="4.2" fill="#5aa87c" font-family="Liberation Sans,sans-serif">546</text><text x="19" y="21" font-size="4.2" fill="#d98a3a" font-family="Liberation Sans,sans-serif">365</text><text x="35.5" y="21" font-size="4.2" fill="#2f7552" font-family="Liberation Sans,sans-serif">068</text><text x="19" y="29.4" font-size="4.2" fill="#5aa87c" font-family="Liberation Sans,sans-serif">2629</text><text x="35" y="29.4" font-size="4.2" fill="#5aa87c" font-family="Liberation Sans,sans-serif">59860</text></svg>
<div class="b" style="left:1398px;top:150px;width:58px;height:43px;background:#fff;border:2px solid #e0703c;border-radius:1px;"></div>
<svg style="left:1398.25px;top:150.25px" width="57" height="43" viewBox="0 0 57 43"><polygon points="7.50,13.25 10.50,12.25 13.25,11.75 16.75,12.00 19.50,11.38 21.25,13.00 20.25,14.75 21.50,16.25 19.50,17.00 17.75,16.75 17.00,18.50 16.00,19.75 15.25,21.25 16.75,22.75 15.75,23.25 13.75,21.25 12.25,20.25 11.00,18.25 9.75,16.25 8.50,15.00" fill="#dcdcdc"/><polygon points="22.00,11.00 26.25,11.00 25.25,13.00 23.25,13.25" fill="#dcdcdc"/><polygon points="15.50,23.00 18.50,22.75 21.50,25.50 20.75,28.50 18.75,30.75 17.50,33.25 16.50,31.25 15.75,27.75 14.75,25.00" fill="#dcdcdc"/><polygon points="26.25,15.00 28.00,13.25 30.75,12.75 33.75,11.75 38.25,11.25 44.25,12.00 49.50,13.00 48.50,15.00 46.50,15.50 46.75,17.50 45.00,18.50 45.00,20.25 42.75,21.00 42.00,23.00 40.50,22.00 39.75,20.00 38.00,19.75 37.00,22.50 35.50,20.50 33.75,19.25 32.00,19.75 30.75,18.00 28.75,18.25 26.75,17.50" fill="#dcdcdc"/><polygon points="25.25,20.00 28.00,19.00 32.00,20.00 33.75,21.25 35.00,23.25 33.50,24.75 32.75,27.50 31.00,30.50 29.25,30.00 28.75,26.25 26.25,24.25 25.00,22.25" fill="#dcdcdc"/><polygon points="41.50,24.75 43.75,25.25 45.50,26.25 44.75,27.25 42.50,26.50" fill="#dcdcdc"/><polygon points="44.50,28.50 47.75,26.00 50.25,28.25 49.50,30.75 47.50,30.25 45.50,30.50" fill="#dcdcdc"/><circle cx="9.25" cy="20.1" r="1.5" fill="#c8283c"/><circle cx="26.5" cy="13.9" r="1.25" fill="#c8283c"/><circle cx="29.25" cy="17.5" r="1.25" fill="#c8283c"/><circle cx="39.5" cy="18.75" r="2.1" fill="#c8283c"/><circle cx="43.6" cy="24.1" r="1.25" fill="#c8283c"/><circle cx="14.9" cy="25.1" r="0.9" fill="#c8283c"/><circle cx="46.75" cy="29.5" r="1" fill="#c8283c"/><circle cx="9.9" cy="17" r="0.75" fill="#c8283c"/><circle cx="42.6" cy="21.25" r="0.8" fill="#c8283c"/><circle cx="15.1" cy="17.25" r="1" fill="#f4a0a0"/><circle cx="24.9" cy="17" r="1" fill="#f4a0a0"/><circle cx="19.9" cy="26.6" r="1" fill="#f4a0a0"/><circle cx="32.4" cy="22.5" r="0.6" fill="#f4a0a0"/><circle cx="43.4" cy="18.75" r="0.6" fill="#f4a0a0"/></svg>
<div class="b" style="left:1461px;top:150px;width:57px;height:43px;background:#fff;border:1px solid #e1e1e1;border-radius:1px;"></div>
<svg style="left:1461.25px;top:150.25px" width="57" height="43" viewBox="0 0 57 43"><polygon points="7.00,13.25 10.00,12.25 12.75,11.75 16.25,12.00 19.00,11.38 20.75,13.00 19.75,14.75 21.00,16.25 19.00,17.00 17.25,16.75 16.50,18.50 15.50,19.75 14.75,21.25 16.25,22.75 15.25,23.25 13.25,21.25 11.75,20.25 10.50,18.25 9.25,16.25 8.00,15.00" fill="#e0635a"/><polygon points="21.50,11.00 25.75,11.00 24.75,13.00 22.75,13.25" fill="#e0635a"/><polygon points="15.00,23.00 18.00,22.75 21.00,25.50 20.25,28.50 18.25,30.75 17.00,33.25 16.00,31.25 15.25,27.75 14.25,25.00" fill="#e0635a"/><polygon points="25.75,15.00 27.50,13.25 30.25,12.75 33.25,11.75 37.75,11.25 43.75,12.00 49.00,13.00 48.00,15.00 46.00,15.50 46.25,17.50 44.50,18.50 44.50,20.25 42.25,21.00 41.50,23.00 40.00,22.00 39.25,20.00 37.50,19.75 36.50,22.50 35.00,20.50 33.25,19.25 31.50,19.75 30.25,18.00 28.25,18.25 26.25,17.50" fill="#f9a19a"/><polygon points="24.75,20.00 27.50,19.00 31.50,20.00 33.25,21.25 34.50,23.25 33.00,24.75 32.25,27.50 30.50,30.50 28.75,30.00 28.25,26.25 25.75,24.25 24.50,22.25" fill="#f9a19a"/><polygon points="41.00,24.75 43.25,25.25 45.00,26.25 44.25,27.25 42.00,26.50" fill="#f9a19a"/><polygon points="44.00,28.50 47.25,26.00 49.75,28.25 49.00,30.75 47.00,30.25 45.00,30.50" fill="#e0635a"/></svg>
<div class="b" style="left:1523px;top:150px;width:58px;height:43px;background:#fff;border:1px solid #e1e1e1;border-radius:1px;"></div>
<svg style="left:1523.25px;top:150.25px" width="57" height="43" viewBox="0 0 57 43"><path d="M29.6,21.4L29.60,9.40A12,12 0 0 1 37.63,12.48Z" fill="#f79b9b"/><path d="M29.6,21.4L37.63,12.48A12,12 0 0 1 37.31,30.59Z" fill="#4e7fab"/><path d="M29.6,21.4L37.31,30.59A12,12 0 0 1 17.60,21.40Z" fill="#a6cfee"/><path d="M29.6,21.4L17.60,21.40A12,12 0 0 1 29.60,9.40Z" fill="#e0635a"/></svg>
<div class="b" style="left:1398px;top:197px;width:58px;height:44px;background:#fff;border:1px solid #e1e1e1;border-radius:1px;"></div>
<svg style="left:1398.25px;top:197.5px" width="57" height="43" viewBox="0 0 57 43"><rect x="10.75" y="9.75" width="20.00" height="3.35" fill="#4e7fab"/><rect x="10.75" y="16.50" width="36.85" height="3.10" fill="#4e7fab"/><rect x="10.75" y="23.40" width="10.00" height="2.85" fill="#4e7fab"/><rect x="10.75" y="29.75" width="29.00" height="3.35" fill="#4e7fab"/></svg>
<div class="b" style="left:1461px;top:197px;width:57px;height:44px;background:#fff;border:1px solid #e1e1e1;border-radius:1px;"></div>
<svg style="left:1461.25px;top:197.5px" width="57" height="43" viewBox="0 0 57 43"><rect x="10.90" y="9.75" width="6.85" height="5.85" fill="#4e7fab"/><rect x="10.90" y="15.60" width="6.85" height="18.15" fill="#a6cfee"/><rect x="20.40" y="14.75" width="6.50" height="6.75" fill="#4e7fab"/><rect x="20.40" y="21.50" width="6.50" height="12.25" fill="#a6cfee"/><rect x="30.40" y="12.50" width="6.50" height="16.25" fill="#4e7fab"/><rect x="30.40" y="28.75" width="6.50" height="5.00" fill="#a6cfee"/><rect x="40.25" y="18.50" width="6.50" height="7.10" fill="#4e7fab"/><rect x="40.25" y="25.60" width="6.50" height="8.15" fill="#a6cfee"/></svg>
<div class="b" style="left:1523px;top:197px;width:58px;height:44px;background:#fff;border:1px solid #e1e1e1;border-radius:1px;"></div>
<svg style="left:1523.25px;top:197.5px" width="57" height="43" viewBox="0 0 57 43"><rect x="21.90" y="4.60" width="0.40" height="33.50" fill="#ccc"/><rect x="36.90" y="4.60" width="0.40" height="33.50" fill="#ccc"/><rect x="9.90" y="26.50" width="3.35" height="11.60" fill="#4e7fab"/><rect x="14.00" y="19.00" width="3.60" height="19.10" fill="#a6cfee"/><rect x="25.75" y="13.40" width="3.25" height="24.70" fill="#4e7fab"/><rect x="29.60" y="22.50" width="3.80" height="15.60" fill="#a6cfee"/><rect x="40.75" y="29.60" width="3.25" height="8.50" fill="#4e7fab"/><rect x="44.90" y="18.40" width="3.50" height="19.70" fill="#a6cfee"/></svg>
<div class="b" style="left:1398px;top:245px;width:58px;height:43px;background:#fff;border:1px solid #e1e1e1;border-radius:1px;"></div>
<svg style="left:1398.25px;top:245.25px" width="57" height="43" viewBox="0 0 57 43"><rect x="10.75" y="8.90" width="17.25" height="11.70" fill="#7aa7cf"/><rect x="10.75" y="22.00" width="17.25" height="11.75" fill="#4e7fab"/><rect x="29.00" y="8.90" width="8.75" height="8.00" fill="#7aa7cf"/><rect x="38.90" y="8.90" width="8.70" height="8.00" fill="#a6cfee"/><rect x="29.00" y="17.90" width="5.90" height="8.10" fill="#f99f95"/><rect x="29.00" y="26.90" width="5.90" height="6.85" fill="#e0635a"/><rect x="35.75" y="17.90" width="6.00" height="7.85" fill="#7aa7cf"/><rect x="42.75" y="17.90" width="4.85" height="7.85" fill="#a6cfee"/><rect x="35.75" y="26.60" width="6.00" height="7.15" fill="#a6cfee"/><rect x="42.75" y="26.60" width="4.85" height="4.15" fill="#4e7fab"/><rect x="42.75" y="31.60" width="4.85" height="2.15" fill="#a6cfee"/></svg>
<div class="b" style="left:1461px;top:245px;width:57px;height:43px;background:#fff;border:1px solid #e1e1e1;border-radius:1px;"></div>
<svg style="left:1461.25px;top:245.25px" width="57" height="43" viewBox="0 0 57 43"><circle cx="14.4" cy="13.5" r="4" fill="none" stroke="#a6cfee" stroke-width="0.75"/><circle cx="14.4" cy="17" r="4" fill="none" stroke="#4e7fab" stroke-width="0.75"/><circle cx="29.1" cy="13.75" r="4" fill="none" stroke="#4e7fab" stroke-width="0.75"/><circle cx="44" cy="13.5" r="4" fill="none" stroke="#a6cfee" stroke-width="0.75"/><circle cx="44" cy="19.5" r="4" fill="none" stroke="#c3def3" stroke-width="0.75"/><circle cx="14.4" cy="28.25" r="4" fill="none" stroke="#4e7fab" stroke-width="0.75"/><circle cx="29.1" cy="25" r="4" fill="none" stroke="#4e7fab" stroke-width="0.75"/><circle cx="29.1" cy="28.75" r="4" fill="none" stroke="#7aa0c4" stroke-width="0.75"/><circle cx="44" cy="32.6" r="4" fill="none" stroke="#a6cfee" stroke-width="0.75"/><path d="M25.2,38.6A4,4 0 0 1 33,38.6" fill="none" stroke="#a6cfee" stroke-width="0.75"/></svg>
<div class="b" style="left:1523px;top:245px;width:58px;height:43px;background:#fff;border:1px solid #e1e1e1;border-radius:1px;"></div>
<svg style="left:1523.25px;top:245.25px" width="57" height="43" viewBox="0 0 57 43"><rect x="29.05" y="5.00" width="0.40" height="32.50" fill="#ccc"/><circle cx="13.25" cy="16" r="3" fill="none" stroke="#a6cfee" stroke-width="0.75"/><circle cx="13.25" cy="11.9" r="3" fill="none" stroke="#4e7fab" stroke-width="0.75"/><circle cx="21.4" cy="15.4" r="3" fill="none" stroke="#4e7fab" stroke-width="0.75"/><circle cx="21.4" cy="25.1" r="3" fill="none" stroke="#a6cfee" stroke-width="0.75"/><circle cx="13.25" cy="31.6" r="3" fill="none" stroke="#a6cfee" stroke-width="0.75"/><circle cx="21.4" cy="33.25" r="3" fill="none" stroke="#4e7fab" stroke-width="0.75"/><circle cx="38" cy="12.6" r="3" fill="none" stroke="#a6cfee" stroke-width="0.75"/><circle cx="45.9" cy="19.5" r="3" fill="none" stroke="#7aa0c4" stroke-width="0.75"/><circle cx="45.9" cy="15.75" r="3" fill="none" stroke="#4e7fab" stroke-width="0.75"/><circle cx="38" cy="31.4" r="3" fill="none" stroke="#a6cfee" stroke-width="0.75"/><circle cx="38" cy="28.25" r="3" fill="none" stroke="#4e7fab" stroke-width="0.75"/><circle cx="45.9" cy="30" r="3" fill="none" stroke="#a6cfee" stroke-width="0.75"/></svg>
<div class="b" style="left:1398px;top:292px;width:58px;height:44px;background:#fff;border:1px solid #e1e1e1;border-radius:1px;"></div>
<svg style="left:1398.25px;top:292.5px" width="57" height="43" viewBox="0 0 57 43"><polyline points="9.9,18.75 15.75,21.25 25.25,14 39.25,24.75 48.6,23.1" fill="none" stroke="#fde6cc" stroke-width="0.9" stroke-linejoin="round" stroke-linecap="round"/><polyline points="10.5,13.1 15.75,8.75 25.25,21.5 33,15 39.25,20.25 48.6,16" fill="none" stroke="#fbd4ae" stroke-width="0.9" stroke-linejoin="round" stroke-linecap="round"/><polyline points="9.5,25.25 15.75,31.6 29.6,24.1 39.9,30.6 48.6,29" fill="none" stroke="#c5d5e4" stroke-width="0.9" stroke-linejoin="round" stroke-linecap="round"/></svg>
<div class="b" style="left:1461px;top:292px;width:57px;height:44px;background:#fff;border:1px solid #e1e1e1;border-radius:1px;"></div>
<svg style="left:1461.25px;top:292.5px" width="57" height="43" viewBox="0 0 57 43"><rect x="28.95" y="4.60" width="0.35" height="33.50" fill="#e4e4e4"/><polyline points="8.75,18.4 14.4,19.4 20.6,14 25.6,14.4" fill="none" stroke="#fbd4ae" stroke-width="0.9" stroke-linejoin="round" stroke-linecap="round"/><polyline points="8.75,23.75 14.4,22.5 20.6,17.5 25.6,20.25" fill="none" stroke="#fde6cc" stroke-width="0.9" stroke-linejoin="round" stroke-linecap="round"/><polyline points="8.75,29.6 14.4,31.9 20.6,26.6 25.6,26.6" fill="none" stroke="#c5d5e4" stroke-width="0.9" stroke-linejoin="round" stroke-linecap="round"/><polyline points="31.5,18.1 37.25,11.9 42.25,15.6 48.75,14.4" fill="none" stroke="#fbd4ae" stroke-width="0.9" stroke-linejoin="round" stroke-linecap="round"/><polyline points="31.5,24 37.25,21.9 42.25,23.5 48.75,20" fill="none" stroke="#fde6cc" stroke-width="0.9" stroke-linejoin="round" stroke-linecap="round"/><polyline points="31.5,29.75 37.25,26.5 42.25,29 48.75,26.6" fill="none" stroke="#c5d5e4" stroke-width="0.9" stroke-linejoin="round" stroke-linecap="round"/></svg>
<div class="b" style="left:1523px;top:292px;width:58px;height:44px;background:#fff;border:1px solid #e1e1e1;border-radius:1px;"></div>
<svg style="left:1523.25px;top:292.5px" width="57" height="43" viewBox="0 0 57 43"><rect x="8.25" y="8.75" width="2.25" height="0.35" fill="#ededed"/><rect x="48.25" y="8.75" width="2.50" height="0.35" fill="#ededed"/><rect x="8.25" y="11.85" width="2.25" height="0.35" fill="#ededed"/><rect x="48.25" y="11.85" width="2.50" height="0.35" fill="#ededed"/><rect x="8.25" y="14.95" width="2.25" height="0.35" fill="#ededed"/><rect x="48.25" y="14.95" width="2.50" height="0.35" fill="#ededed"/><rect x="8.25" y="18.05" width="2.25" height="0.35" fill="#ededed"/><rect x="48.25" y="18.05" width="2.50" height="0.35" fill="#ededed"/><rect x="8.25" y="21.15" width="2.25" height="0.35" fill="#ededed"/><rect x="48.25" y="21.15" width="2.50" height="0.35" fill="#ededed"/><rect x="8.25" y="24.25" width="2.25" height="0.35" fill="#ededed"/><rect x="48.25" y="24.25" width="2.50" height="0.35" fill="#ededed"/><rect x="8.25" y="27.35" width="2.25" height="0.35" fill="#ededed"/><rect x="48.25" y="27.35" width="2.50" height="0.35" fill="#ededed"/><rect x="8.25" y="30.45" width="2.25" height="0.35" fill="#ededed"/><rect x="48.25" y="30.45" width="2.50" height="0.35" fill="#ededed"/><rect x="8.25" y="33.55" width="2.25" height="0.35" fill="#ededed"/><rect x="48.25" y="33.55" width="2.50" height="0.35" fill="#ededed"/><polyline points="13.6,15.9 20.75,9.4 28.25,15.6 33,13.1 40.75,18.1 46.1,14" fill="none" stroke="#fbd4ae" stroke-width="0.9" stroke-linejoin="round" stroke-linecap="round"/><polyline points="13.6,23.1 20.75,20 28.25,28.5 33,25.6 40.75,29.75 46.1,23.4" fill="none" stroke="#c5d5e4" stroke-width="0.9" stroke-linejoin="round" stroke-linecap="round"/></svg>
<div class="b" style="left:1398px;top:340px;width:58px;height:43px;background:#fff;border:1px solid #e1e1e1;border-radius:1px;"></div>
<svg style="left:1398.25px;top:340.25px" width="57" height="43" viewBox="0 0 57 43"><polygon points="8.25,36.25 8.25,22.25 18.00,10.40 35.25,21.60 49.90,16.60 49.90,36.25" fill="#c9d8e6"/><polygon points="8.25,36.25 8.25,23.25 18.00,16.90 35.25,28.25 49.90,19.75 49.90,36.25" fill="#fde0c2"/><polygon points="8.25,36.25 8.25,30.10 18.00,25.75 35.25,31.40 49.90,26.60 49.90,36.25" fill="#fef3e6"/></svg>
<div class="b" style="left:1461px;top:340px;width:57px;height:43px;background:#fff;border:1px solid #e1e1e1;border-radius:1px;"></div>
<svg style="left:1461.25px;top:340.25px" width="57" height="43" viewBox="0 0 57 43"><polygon points="7.75,36.25 7.75,22.25 12.50,10.40 20.90,21.60 27.75,16.60 27.75,36.25" fill="#c9d8e6"/><polygon points="7.75,36.25 7.75,23.25 12.50,16.90 20.90,28.25 27.75,19.75 27.75,36.25" fill="#fde0c2"/><polygon points="7.75,36.25 7.75,30.10 12.50,25.75 20.90,31.40 27.75,26.60 27.75,36.25" fill="#fef3e6"/><polygon points="29.75,36.25 29.75,22.25 34.50,10.40 42.90,21.60 49.75,16.60 49.75,36.25" fill="#c9d8e6"/><polygon points="29.75,36.25 29.75,23.25 34.50,16.90 42.90,28.25 49.75,19.75 49.75,36.25" fill="#fde0c2"/><polygon points="29.75,36.25 29.75,30.10 34.50,25.75 42.90,31.40 49.75,26.60 49.75,36.25" fill="#fef3e6"/></svg>
<div class="b" style="left:1523px;top:340px;width:58px;height:43px;background:#fff;border:1px solid #e1e1e1;border-radius:1px;"></div>
<svg style="left:1523.25px;top:340.25px" width="57" height="43" viewBox="0 0 57 43"><rect x="8.25" y="8.10" width="2.25" height="0.35" fill="#ededed"/><rect x="48.25" y="8.10" width="2.50" height="0.35" fill="#ededed"/><rect x="8.25" y="13.10" width="2.25" height="0.35" fill="#ededed"/><rect x="48.25" y="13.10" width="2.50" height="0.35" fill="#ededed"/><rect x="8.25" y="18.10" width="2.25" height="0.35" fill="#ededed"/><rect x="48.25" y="18.10" width="2.50" height="0.35" fill="#ededed"/><rect x="8.25" y="23.10" width="2.25" height="0.35" fill="#ededed"/><rect x="48.25" y="23.10" width="2.50" height="0.35" fill="#ededed"/><rect x="8.25" y="28.10" width="2.25" height="0.35" fill="#ededed"/><rect x="48.25" y="28.10" width="2.50" height="0.35" fill="#ededed"/><rect x="8.25" y="33.10" width="2.25" height="0.35" fill="#ededed"/><rect x="48.25" y="33.10" width="2.50" height="0.35" fill="#ededed"/><rect x="14.00" y="22.00" width="4.40" height="14.25" fill="#c9d8e6"/><rect x="20.90" y="17.90" width="4.00" height="18.35" fill="#c9d8e6"/><rect x="27.75" y="25.75" width="4.00" height="10.50" fill="#c9d8e6"/><rect x="34.00" y="10.60" width="4.25" height="25.65" fill="#c9d8e6"/><rect x="40.90" y="21.25" width="4.00" height="15.00" fill="#c9d8e6"/><polyline points="14.9,19.4 22.4,12.25 29.25,22 36.75,15.4 43.6,21.9" fill="none" stroke="#fbd4ae" stroke-width="0.9" stroke-linejoin="round" stroke-linecap="round"/></svg>
<div class="b" style="left:1398px;top:387px;width:58px;height:44px;background:#fff;border:1px solid #e1e1e1;border-radius:1px;"></div>
<svg style="left:1398.25px;top:387.5px" width="57" height="43" viewBox="0 0 57 43"><circle cx="24.25" cy="14" r="2.9" fill="none" stroke="#fbd4ae" stroke-width="0.8"/><circle cx="41.5" cy="15.6" r="2.9" fill="none" stroke="#fbd4ae" stroke-width="0.8"/><circle cx="17.4" cy="22.25" r="2.9" fill="none" stroke="#fbd4ae" stroke-width="0.8"/><circle cx="26.4" cy="25.6" r="2.9" fill="none" stroke="#fbd4ae" stroke-width="0.8"/><circle cx="12.1" cy="32.25" r="2.9" fill="none" stroke="#fbd4ae" stroke-width="0.8"/><path d="M31.75,10h7M35.25,6.5v7" stroke="#cfe6da" stroke-width="0.8" fill="none"/><path d="M28.5,19.1h7M32,15.600000000000001v7" stroke="#cfe6da" stroke-width="0.8" fill="none"/><path d="M41.0,24.4h7M44.5,20.9v7" stroke="#cfe6da" stroke-width="0.8" fill="none"/><path d="M17.0,30h7M20.5,26.5v7" stroke="#cfe6da" stroke-width="0.8" fill="none"/><path d="M31.75,29.4h7M35.25,25.9v7" stroke="#cfe6da" stroke-width="0.8" fill="none"/></svg>
<div class="b" style="left:1461px;top:387px;width:57px;height:44px;background:#fff;border:1px solid #e1e1e1;border-radius:1px;"></div>
<svg style="left:1461.25px;top:387.5px" width="57" height="43" viewBox="0 0 57 43"><rect x="10.25" y="33.50" width="3.50" height="1.90" fill="#cfe6da"/><rect x="14.75" y="29.00" width="3.00" height="6.40" fill="#cfe6da"/><rect x="18.75" y="21.60" width="3.15" height="13.80" fill="#cfe6da"/><rect x="22.75" y="13.50" width="3.25" height="21.90" fill="#cfe6da"/><rect x="26.90" y="9.75" width="3.35" height="25.65" fill="#cfe6da"/><rect x="31.00" y="13.50" width="3.60" height="21.90" fill="#cfe6da"/><rect x="35.60" y="21.60" width="3.15" height="13.80" fill="#cfe6da"/><rect x="39.75" y="29.00" width="3.00" height="6.40" fill="#cfe6da"/><rect x="43.75" y="33.50" width="3.15" height="1.90" fill="#cfe6da"/></svg>
<div class="b" style="left:1523px;top:387px;width:58px;height:44px;background:#fff;border:1px solid #e1e1e1;border-radius:1px;"></div>
<svg style="left:1523.25px;top:387.5px" width="57" height="43" viewBox="0 0 57 43"><rect x="11.75" y="19.00" width="5.85" height="3.90" fill="#9fd7b0"/><rect x="11.75" y="22.90" width="5.85" height="5.85" fill="#59a983"/><path d="M14.6,12.75V32.1M12.6,12.75h4M12.6,32.1h4" stroke="#444" stroke-width="0.7" fill="none" opacity="0.85"/><rect x="21.75" y="14.75" width="5.85" height="7.75" fill="#9fd7b0"/><rect x="21.75" y="22.50" width="5.85" height="3.75" fill="#59a983"/><path d="M24.6,11V33.75M22.6,11h4M22.6,33.75h4" stroke="#444" stroke-width="0.7" fill="none" opacity="0.85"/><rect x="31.75" y="17.50" width="5.85" height="6.90" fill="#9fd7b0"/><rect x="31.75" y="24.40" width="5.85" height="5.60" fill="#59a983"/><path d="M34.6,10V34.4M32.6,10h4M32.6,34.4h4" stroke="#444" stroke-width="0.7" fill="none" opacity="0.85"/><rect x="41.75" y="13.50" width="5.85" height="10.25" fill="#9fd7b0"/><rect x="41.75" y="23.75" width="5.85" height="3.50" fill="#59a983"/><path d="M44.6,8.5V35M42.6,8.5h4M42.6,35h4" stroke="#444" stroke-width="0.7" fill="none" opacity="0.85"/></svg>
<div class="b" style="left:1398px;top:435px;width:58px;height:43px;background:#fff;border:1px solid #e1e1e1;border-radius:1px;"></div>
<svg style="left:1398.25px;top:435.25px" width="57" height="43" viewBox="0 0 57 43"><rect x="8.90" y="6.90" width="7.85" height="6.85" fill="#cfe6da"/><rect x="22.60" y="6.90" width="2.90" height="6.85" fill="#fbd4ae"/><rect x="26.75" y="6.90" width="2.85" height="6.85" fill="#fde6cc"/><rect x="35.75" y="6.90" width="1.85" height="6.85" fill="#fbd4ae"/><rect x="40.90" y="6.90" width="6.70" height="6.85" fill="#fde6cc"/><rect x="8.90" y="17.00" width="5.00" height="6.75" fill="#e3f2ea"/><rect x="14.90" y="17.00" width="2.70" height="6.75" fill="#cfe6da"/><rect x="20.90" y="17.00" width="3.10" height="6.75" fill="#cfe6da"/><rect x="26.75" y="17.00" width="11.50" height="6.75" fill="#e3f2ea"/><rect x="42.75" y="17.00" width="6.15" height="6.75" fill="#fbd4ae"/><rect x="8.90" y="27.90" width="1.85" height="6.60" fill="#cfe6da"/><rect x="13.40" y="27.90" width="6.50" height="6.60" fill="#fde6cc"/><rect x="21.75" y="27.90" width="1.50" height="6.60" fill="#fbd4ae"/><rect x="24.60" y="27.90" width="3.65" height="6.60" fill="#e3f2ea"/><rect x="33.00" y="27.90" width="6.00" height="6.60" fill="#cfe6da"/><rect x="43.90" y="27.90" width="3.70" height="6.60" fill="#fde6cc"/></svg>
<div class="b" style="left:1461px;top:435px;width:57px;height:43px;background:#fff;border:1px solid #e1e1e1;border-radius:1px;"></div>
<svg style="left:1461.25px;top:435.25px" width="57" height="43" viewBox="0 0 57 43"><rect x="9.75" y="8.25" width="33.00" height="6.25" fill="#f5f5f5"/><rect x="9.75" y="9.50" width="20.50" height="3.40" fill="#cfe6da"/><rect x="32.85" y="7.85" width="0.50" height="6.65" fill="#9a9a9a"/><rect x="9.75" y="18.25" width="37.15" height="6.25" fill="#f5f5f5"/><rect x="9.75" y="19.50" width="33.00" height="3.40" fill="#cfe6da"/><rect x="38.85" y="17.85" width="0.50" height="6.65" fill="#9a9a9a"/><rect x="9.75" y="27.90" width="37.15" height="6.60" fill="#f5f5f5"/><rect x="9.75" y="29.50" width="17.15" height="3.40" fill="#cfe6da"/><rect x="44.15" y="27.50" width="0.50" height="7.00" fill="#9a9a9a"/></svg>
<div class="b" style="left:1523px;top:435px;width:58px;height:43px;background:#fff;border:1px solid #e1e1e1;border-radius:1px;"></div>
<svg style="left:1523.25px;top:435.25px" width="57" height="43" viewBox="0 0 57 43"><circle cx="18.6" cy="26.9" r="7.9" fill="#9fd7b0"/><circle cx="19.5" cy="15" r="2.9" fill="#59a983"/><circle cx="27.6" cy="12.9" r="4.1" fill="#59a983"/><circle cx="35.5" cy="13.5" r="2.25" fill="#9fd7b0"/><circle cx="43.6" cy="17.5" r="5.4" fill="#fdb977"/><circle cx="31.4" cy="21.6" r="4.6" fill="#fdb977"/><circle cx="39.5" cy="26.6" r="3.1" fill="#f28e2b"/><circle cx="30.9" cy="31.4" r="3.4" fill="#59a983"/></svg>
<div class="t" style="left:1400px;top:494.87px;font-size:12.5px;line-height:20px;color:#222;">For <b>symbol maps</b> try</div>
<div class="t" style="left:1400px;top:521.27px;font-size:12.5px;line-height:20px;color:#333;">1 geo</div>
<svg style="left:1436px;top:525.5px" width="10" height="10" viewBox="0 0 10 10" fill="none" stroke="#666" stroke-width="0.8"><circle cx="5" cy="5" r="4.3"/><path d="M0.7 5h8.6M5 0.7v8.6M3 1.2c-1 2.5-1 5 0 7.6M7 1.2c1 2.5 1 5 0 7.6"/></svg>
<div class="t" style="left:1400px;top:549.67px;font-size:12.5px;line-height:20px;color:#333;">0 or more</div>
<div class="t" style="left:1400px;top:577.27px;font-size:12.5px;line-height:20px;color:#333;">0 to 2</div>
<div class="b" style="left:1450.6px;top:520px;width:87.4px;height:20px;background:#4996b2;border-radius:10px;"></div>
<div class="t" style="left:1461.6px;top:520.50px;font-size:13px;line-height:20px;color:#fff;">Dimension</div>
<div class="b" style="left:1459.4px;top:548px;width:93.6px;height:20px;background:#4996b2;border-radius:10px;"></div>
<div class="t" style="left:1470px;top:548.50px;font-size:13px;line-height:20px;color:#fff;">Dimensions</div>
<div class="b" style="left:1435.4px;top:576.5px;width:81.6px;height:20px;background:#00b180;border-radius:10px;"></div>
<div class="t" style="left:1446.6px;top:576.90px;font-size:13px;line-height:20px;color:#fff;">Measures</div>
<div class="t" style="left:1400px;top:606.67px;font-size:12.5px;line-height:20px;color:#8a8a8a;">May use spatial measure in</div>
<div class="t" style="left:1400px;top:622.77px;font-size:12.5px;line-height:20px;color:#8a8a8a;">place of geo dimension</div>
<svg style="left:205px;top:96px" width="6" height="9" viewBox="0 0 6 9" ><path d="M5 0.6L1 4.5l4 3.9" fill="none" stroke="#666" stroke-width="1"/></svg>
<svg style="left:22px;top:123px" width="12" height="13" viewBox="0 0 12 13" ><ellipse cx="4.6" cy="2.2" rx="3.9" ry="1.6" fill="none" stroke="#666" stroke-width="0.9"/><path d="M0.7 2.2v7c0 0.9 1.4 1.5 3 1.6M8.5 2.2v3.6" fill="none" stroke="#666" stroke-width="0.9"/><circle cx="8.6" cy="9.6" r="2.9" fill="#2f8ab4"/><path d="M7.3 9.1l1.3 1.3 1.3-1.3" fill="none" stroke="#fff" stroke-width="0.8"/></svg>
<svg style="left:141px;top:159px" width="9" height="10" viewBox="0 0 9 10" ><circle cx="5.2" cy="3.8" r="2.9" fill="none" stroke="#666" stroke-width="1"/><path d="M3.2 6L0.8 8.8" stroke="#666" stroke-width="1.1"/></svg>
<svg style="left:160px;top:159px" width="11" height="11" viewBox="0 0 11 11" ><path d="M0.6 0.6h9.8L6.6 5.4v4.8L4.4 9V5.4z" fill="none" stroke="#555" stroke-width="0.9" stroke-linejoin="round"/></svg>
<svg style="left:181px;top:161px" width="10" height="8" viewBox="0 0 10 8" ><rect x="0" y="0" width="2" height="1.6" fill="#555"/><rect x="3" y="0" width="2.6" height="1.6" fill="#555"/><rect x="6.4" y="0" width="2.6" height="1.6" fill="#555"/><rect x="0" y="3" width="2" height="1.6" fill="#555"/><rect x="3" y="3" width="2.6" height="1.6" fill="#555"/><rect x="6.4" y="3" width="2.6" height="1.6" fill="#555"/><rect x="0" y="6" width="2" height="1.6" fill="#555"/><rect x="3" y="6" width="2.6" height="1.6" fill="#555"/><rect x="6.4" y="6" width="2.6" height="1.6" fill="#555"/></svg>
<svg style="left:199px;top:163.5px" width="5" height="3" viewBox="0 0 5 3" ><path d="M0 0h5l-2.5 3z" fill="#444"/></svg>
<svg style="left:370.5px;top:101.5px" width="7" height="3" viewBox="0 0 7 3" ><path d="M0 0h7l-3.5 3z" fill="#b0b0b0"/></svg>
<svg style="left:366px;top:276.5px" width="5.5" height="3" viewBox="0 0 5.5 3" ><path d="M0 0h5.5l-2.75 3z" fill="#444"/></svg>
</body></html>
